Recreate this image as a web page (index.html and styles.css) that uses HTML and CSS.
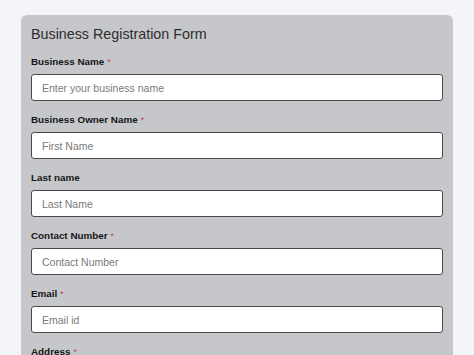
FILE: index.html
```html
<!DOCTYPE html>
<html>
<head>
<meta charset="utf-8">
<link rel="stylesheet" href="styles.css">
</head>
<body>
<div class="card">
  <h1 class="title">Business Registration Form</h1>
  <div class="group">
    <label class="label">Business Name <span class="req">*</span></label>
    <input class="input" type="text" placeholder="Enter your business name">
  </div>
  <div class="group">
    <label class="label">Business Owner Name <span class="req">*</span></label>
    <input class="input" type="text" placeholder="First Name">
  </div>
  <div class="group">
    <label class="label">Last name</label>
    <input class="input" type="text" placeholder="Last Name">
  </div>
  <div class="group">
    <label class="label">Contact Number <span class="req">*</span></label>
    <input class="input" type="text" placeholder="Contact Number">
  </div>
  <div class="group">
    <label class="label">Email <span class="req">*</span></label>
    <input class="input" type="text" placeholder="Email id">
  </div>
  <div class="group">
    <label class="label">Address <span class="req">*</span></label>
    <input class="input" type="text" placeholder="Address">
  </div>
</div>
</body>
</html>
```
FILE: styles.css
```css
html, body {
  margin: 0;
  padding: 0;
  background: #f4f5f9;
  font-family: "Liberation Sans", Arial, sans-serif;
}
.card {
  margin: 15px 21px 20px 21px;
  padding: 10px 10px 20px 10px;
  background: #c6c7cb;
  border-radius: 6px;
}
.title {
  margin: 0 0 11px 0;
  font-size: 14.3px;
  line-height: 19px;
  font-weight: normal;
  color: #2e2e2e;
}
.group {
  margin-bottom: 12px;
}
.label {
  display: block;
  font-size: 9.85px;
  line-height: 13px;
  font-weight: bold;
  color: #151515;
  margin-bottom: 6px;
}
.req {
  color: #c0504d;
  font-weight: normal;
}
.input {
  display: block;
  box-sizing: border-box;
  width: 100%;
  height: 27px;
  margin: 0;
  padding: 0 10px;
  border: 1px solid #4a4a4a;
  border-radius: 3px;
  background: #ffffff;
  font-family: "Liberation Sans", Arial, sans-serif;
  font-size: 10.5px;
  color: #222;
  outline: none;
}
.input::placeholder {
  color: #7a7a7a;
}
```
